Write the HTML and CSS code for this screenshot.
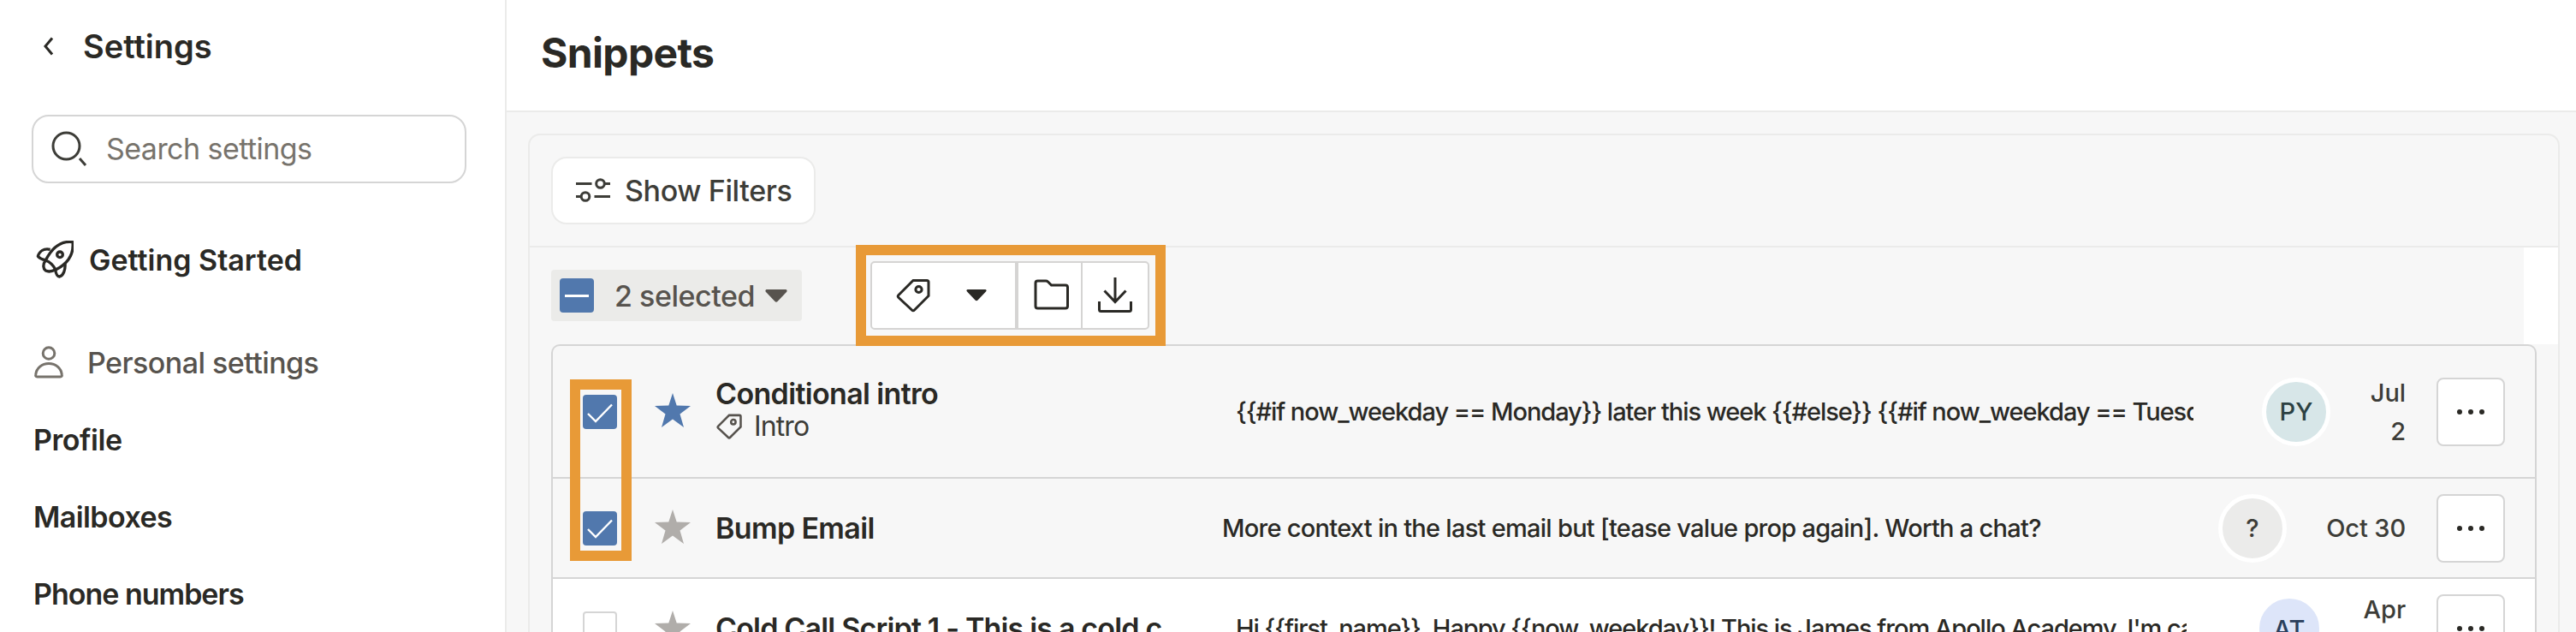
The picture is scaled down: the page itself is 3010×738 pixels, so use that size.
FILE: index.html
```
<!DOCTYPE html>
<html lang="en">
<head>
    <meta charset="UTF-8">
    <title>Snippets</title>
    <meta name="viewport" content="width=device-width, initial-scale=1.0">
    <link rel="stylesheet" href="styles.css">
</head>
<body>
    <nav class="sidebar">
        <div class="sidebar-title">
            <svg width="14" height="22" viewBox="0 0 14 22"><path d="M12 1.500L4 11l8 9.500"/></svg>
            <span>Settings</span>
        </div>
        <div class="search">
            <svg width="44" height="44" viewBox="0 0 44 44"><circle cx="18.500" cy="18.500" r="15.500"/><path d="M34 33l7 8"/></svg>
            <span>Search settings</span>
        </div>
        <a class="nav-item getting-started">
            <svg width="44" height="44" viewBox="36 36 132 132">
                <path d="M165 41C128 36 96 54 70 105Q92 113 105 138C148 116 169 82 165 41z"/>
                <path d="M86 67C62 62 48 74 43 91Q52 101 70 104"/>
                <path d="M138 116C140 138 132 158 119 162Q108 163 104 138"/>
                <path d="M70 105C59 119 61 134 70 141Q84 148 104 138"/>
                <circle cx="120" cy="85" r="10"/>
            </svg>
            <span>Getting Started</span>
        </a>
        <div class="nav-item nav-section">
            <svg width="34" height="38" viewBox="0 0 34 38"><circle cx="17" cy="8.500" r="6.800"/><path d="M3.500 36C1.800 36 1.500 35 1.700 33.500C2.500 26 9 20.500 17 20.500S31.500 26 32.300 33.500C32.500 35 32.200 36 30.500 36z"/></svg>
            <span>Personal settings</span>
        </div>
        <a class="nav-item profile">Profile</a>
        <a class="nav-item mailboxes">Mailboxes</a>
        <a class="nav-item phones">Phone numbers</a>
    </nav>

    <main class="main">
        <header class="header"><h1>Snippets</h1></header>

        <section class="card">
            <div class="filters">
                <button class="filter-btn">
                    <svg width="40" height="28" viewBox="0 0 40 28">
                        <path d="M0 6.500h18.500M34 6.500h6M0 21.500h5M21.500 21.500H40"/>
                        <circle cx="28.500" cy="6.500" r="4.800"/><circle cx="11" cy="21.500" r="4.800"/>
                    </svg>
                    <span>Show Filters</span>
                </button>
            </div>

            <div class="toolbar">
                <button class="selected-btn">
                    <span class="check mixed"></span>
                    <span class="selected-text">2 selected</span>
                    <svg width="26" height="15" viewBox="0 0 26 15"><path d="M1.500 0h23q2 1 .5 3L14.500 14q-1.500 1.300-3 0L1 3Q-.500 1 1.500 0z"/></svg>
                </button>
                <div class="actions">
                    <button class="action tag-action">
                        <svg width="40" height="40" viewBox="0 0 40 40"><path d="M20 2.500h16q2 0 2 2v16L21.500 37q-1.500 1.500-3 0L3 22.500q-1.500-1.500 0-3z"/><circle cx="26.500" cy="13" r="3.600"/></svg>
                        <svg class="caret" width="24" height="14" viewBox="0 0 24 14"><path d="M1.500 0h21q2 1 .5 2.500L13.500 12.500q-1.500 1.500-3 0L1 2.500Q-.500 1 1.500 0z"/></svg>
                    </button>
                    <button class="action folder-action">
                        <svg width="42" height="38" viewBox="0 0 42 38"><path d="M4.500 2H14q1.500 0 2.500 1L20.500 7H37q2.500 0 2.500 2.500V31.500q0 2.500-2.500 2.500H4.500Q2 34 2 31.500V4.500Q2 2 4.500 2z"/></svg>
                    </button>
                    <button class="action">
                        <svg width="40" height="42" viewBox="0 0 40 42"><path d="M20 0v28M7.500 15.500L20 28.500l12.500-13M1.500 28v9.500q0 2 2 2h33q2 0 2-2V28"/></svg>
                    </button>
                    <div class="highlight"></div>
                </div>
            </div>

            <div class="table">
                <div class="row row-conditional">
                    <span class="check on"><svg width="40" height="40" viewBox="0 0 40 40"><path d="M6 22l9 9 19-19.500"/></svg></span>
                    <svg class="star starred" width="42" height="40" viewBox="0 0 42 40"><path d="M21 0l4.700 14.500L42 15 29.500 24.500 34 40 21 30.500 8 40l4.500-15.500L0 15l16.300-.5z"/></svg>
                    <div class="name">
                        <div>Conditional intro</div>
                        <div class="tag">
                            <svg width="30" height="30" viewBox="0 0 40 40"><path d="M20 2.500h16q2 0 2 2v16L21.500 37q-1.500 1.500-3 0L3 22.500q-1.500-1.500 0-3z"/><circle cx="26.500" cy="13" r="3.600"/></svg>
                            <span>Intro</span>
                        </div>
                    </div>
                    <div class="preview">{{#if now_weekday == Monday}} later this week {{#else}} {{#if now_weekday == Tuesd</div>
                    <span class="avatar py">PY</span>
                    <div class="date">Jul<br>2</div>
                    <button class="more"><i></i><i></i><i></i></button>
                </div>
                <div class="row row-bump">
                    <span class="check on"><svg width="40" height="40" viewBox="0 0 40 40"><path d="M6 21l9 9 19-19.500"/></svg></span>
                    <svg class="star" width="42" height="40" viewBox="0 0 42 40"><path d="M21 0l4.700 14.500L42 15 29.500 24.500 34 40 21 30.500 8 40l4.500-15.500L0 15l16.300-.5z"/></svg>
                    <div class="name">Bump Email</div>
                    <div class="preview">More context in the last email but [tease value prop again]. Worth a chat?</div>
                    <span class="avatar">?</span>
                    <div class="date">Oct 30</div>
                    <button class="more"><i></i><i></i><i></i></button>
                </div>
                <div class="row row-cold">
                    <span class="check"></span>
                    <svg class="star" width="42" height="40" viewBox="0 0 42 40"><path d="M21 0l4.700 14.500L42 15 29.500 24.500 34 40 21 30.500 8 40l4.500-15.500L0 15l16.300-.5z"/></svg>
                    <div class="name">Cold Call Script 1 - This is a cold c</div>
                    <div class="preview">Hi {{first_name}}, Happy {{now_weekday}}! This is James from Apollo Academy, I'm ca</div>
                    <span class="avatar at">AT</span>
                    <div class="date">Apr</div>
                    <button class="more"><i></i><i></i><i></i></button>
                </div>
                <div class="highlight-rows"></div>
            </div>
        </section>
    </main>
</body>
</html>
```
FILE: styles.css
```
* {
    box-sizing: border-box;
}
body {
    display: flex;
    height: 738px;
    margin: 0;
    overflow: hidden;
    background-color: #fff;
    color: #2a2925;
    font-family: Inter, "Liberation Sans", sans-serif;
    font-size: 34px;
    font-weight: 500;
}
svg {
    display: block;
    flex: none;
    fill: none;
    stroke: #2a2925;
    stroke-width: 3;
}
button {
    display: flex;
    align-items: center;
    padding: 0;
    border: none;
    color: inherit;
    font: inherit;
}

/* Sidebar */
.sidebar {
    flex: none;
    width: 592px;
    height: 738px;
    overflow: hidden;
    border-right: 2px solid #ebebea;
}
.sidebar-title {
    display: flex;
    align-items: center;
    gap: 34px;
    height: 108px;
    padding-left: 49px;
    font-size: 38px;
    font-weight: 600;
}
.search {
    display: flex;
    align-items: center;
    width: 508px;
    height: 80px;
    margin: 26px 0 44px 37px;
    padding: 0 0 1px 20px;
    gap: 21px;
    border: 2px solid #d5d5d5;
    border-radius: 20px;
    color: #77736c;
    font-weight: 400;
    letter-spacing: -0.55px;
}
.search svg {
    stroke: #3d3d38;
}
.nav-item {
    display: flex;
    align-items: center;
    height: 90px;
    padding-left: 39px;
    font-weight: 600;
}
.getting-started {
    margin-bottom: 30px;
    padding-left: 42px;
    gap: 18px;
}
.getting-started svg {
    stroke-width: 10;
    stroke-linejoin: round;
}
.nav-section {
    padding-left: 40px;
    gap: 28px;
    color: #57534e;
    font-weight: 500;
    letter-spacing: -0.56px;
}
.nav-section svg {
    stroke: #77736c;
}
.profile {
    letter-spacing: -0.43px;
}
.mailboxes {
    letter-spacing: -0.58px;
}
.phones {
    letter-spacing: -1px;
}

/* Main */
.main {
    flex: 1;
    min-width: 0;
    height: 738px;
    overflow: hidden;
    background-color: #f7f7f7;
}
.header {
    display: flex;
    align-items: center;
    height: 131px;
    padding: 0 0 6px 40px;
    border-bottom: 2px solid #ebebea;
    background-color: #fff;
}
.header h1 {
    margin: 0;
    font-size: 48px;
    font-weight: 700;
    letter-spacing: -0.67px;
}
.card {
    height: 582px;
    margin: 25px 19px 0 25px;
    border: 2px solid #ebebea;
    border-bottom: none;
    border-radius: 14px 14px 0 0;
}
.filters {
    height: 131px;
    padding: 25px;
    border-bottom: 2px solid #ebebea;
}
.filter-btn {
    width: 309px;
    height: 79px;
    padding: 0 0 1px 27px;
    gap: 17px;
    border: 2px solid #ebebea;
    border-radius: 18px;
    background-color: #fff;
    color: #3d3d38;
    letter-spacing: -0.38px;
}
.filter-btn svg {
    stroke: #3d3d38;
}
.toolbar {
    display: flex;
    align-items: center;
    height: 113px;
    padding: 0 0 1px 25px;
    border-right: 40px solid #fff;
}
.selected-btn {
    width: 293px;
    height: 60px;
    padding-left: 10px;
    border-radius: 4px;
    background-color: #ebebe9;
    color: #57534e;
    letter-spacing: -0.46px;
}
.selected-text {
    width: 176px;
    margin-left: 24px;
    text-align: left;
}
.selected-btn svg {
    fill: #57534e;
    stroke: none;
}
.actions {
    position: relative;
    display: flex;
    width: 326px;
    height: 80px;
    margin-left: 80px;
    border: 2px solid #d5d4d3;
    border-radius: 5px;
    background-color: #fff;
}
.action {
    justify-content: center;
    flex: 1;
    background: none;
}
.tag-action {
    flex: none;
    justify-content: flex-start;
    width: 171px;
    padding-left: 28px;
    gap: 42px;
    border-right: 4px solid #d5d4d3;
}
.folder-action {
    flex: none;
    width: 75px;
    border-right: 2px solid #d5d4d3;
}
.folder-action svg {
    margin-left: 4px;
}
.caret {
    fill: #2a2925;
    stroke: none;
}
.highlight {
    position: absolute;
    z-index: 2;
    top: -21px;
    right: -21px;
    bottom: -21px;
    left: -19px;
    border: 12px solid #e89a37;
}

/* Checkboxes */
.check {
    display: flex;
    flex: none;
    align-items: center;
    justify-content: center;
    width: 40px;
    height: 40px;
    border: 2px solid #d5d5d5;
    border-radius: 4px;
    background-color: #fff;
}
.check.on,
.check.mixed {
    border: none;
    background-color: #5178ad;
}
.check.on svg {
    stroke: #fff;
    stroke-width: 2.4;
}
.mixed::before {
    content: "";
    width: 28px;
    height: 3px;
    background-color: #fff;
}

/* Snippet rows */
.table {
    position: relative;
    height: 336px;
    margin: 0 25px;
    overflow: hidden;
    border: 2px solid #d5d5d5;
    border-bottom: none;
    border-radius: 10px 10px 0 0;
}
.row {
    display: flex;
    align-items: center;
    height: 117px;
    padding: 0 35px;
    border-bottom: 2px solid #d5d5d5;
}
.row-conditional {
    height: 155px;
}
.row-cold {
    height: 118px;
    background-color: #fff;
}
.star {
    margin: 0 29px 3px 44px;
    fill: #b0adaa;
    stroke: none;
}
.starred {
    fill: #5178ad;
}
.name {
    flex: none;
    width: 521px;
    overflow: hidden;
    font-weight: 600;
    line-height: 40px;
    letter-spacing: -0.65px;
    white-space: nowrap;
}
.row-conditional .name {
    margin-bottom: 6px;
}
.row-cold .name {
    letter-spacing: -0.82px;
}
.tag {
    display: flex;
    align-items: center;
    height: 36px;
    gap: 14px;
    color: #3d3d38;
    font-size: 32px;
    font-weight: 400;
    letter-spacing: -0.87px;
}
.tag svg {
    margin-left: 1px;
    stroke: #57534e;
    stroke-width: 3.4;
}
.preview {
    flex: 1;
    min-width: 0;
    margin: 0 80px 0 87px;
    overflow: hidden;
    font-size: 29px;
    font-weight: 450;
    line-height: 44px;
    letter-spacing: -1.05px;
    white-space: nowrap;
}
.row-bump .preview {
    margin-left: 71px;
    letter-spacing: -0.73px;
}
.avatar {
    display: flex;
    flex: none;
    align-items: center;
    justify-content: center;
    width: 80px;
    height: 80px;
    border: 5px solid #fff;
    border-radius: 50%;
    background-color: #ebebea;
    color: #3d3d38;
    font-size: 29px;
    font-weight: 450;
}
.avatar.py {
    background-color: #d7e6e8;
    color: #2c4142;
}
.avatar.at {
    background-color: #dde5f9;
    color: #2a3f5c;
}
.date {
    flex: none;
    width: 139px;
    margin-right: 36px;
    color: #3d3d38;
    font-size: 29px;
    line-height: 45px;
    letter-spacing: -0.1px;
    text-align: right;
}
.row-conditional .date {
    width: 88px;
}
.row-cold .date {
    width: 96px;
    height: 90px;
}
.more {
    flex: none;
    justify-content: center;
    width: 80px;
    height: 80px;
    gap: 7px;
    border: 2px solid #d5d5d5;
    border-radius: 8px;
    background-color: #fff;
}
.more i {
    width: 6px;
    height: 6px;
    border-radius: 50%;
    background-color: #2a2925;
}
.highlight-rows {
    position: absolute;
    top: 39px;
    left: 20px;
    width: 72px;
    height: 212px;
    border: 12px solid #e89a37;
}
```
